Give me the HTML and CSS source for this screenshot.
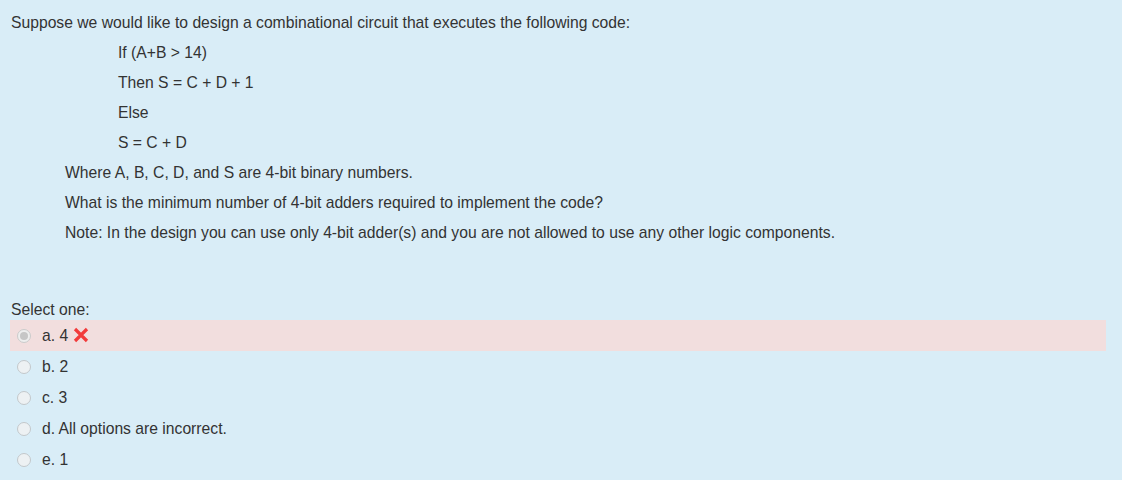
FILE: index.html
```html
<!DOCTYPE html>
<html>
<head>
<meta charset="utf-8">
<link rel="stylesheet" href="styles.css">
</head>
<body>
<div class="que">
  <div class="qtext">
    <p class="line">Suppose we would like to design a combinational circuit that executes the following code:</p>
    <p class="line code">If (A+B &gt; 14)</p>
    <p class="line code">Then S = C + D + 1</p>
    <p class="line code">Else</p>
    <p class="line code">S = C + D</p>
    <p class="line note">Where A, B, C, D, and S are 4-bit binary numbers.</p>
    <p class="line note">What is the minimum number of 4-bit adders required to implement the code?</p>
    <p class="line note">Note: In the design you can use only 4-bit adder(s) and you are not allowed to use any other logic components.</p>
  </div>
  <div class="ablock">
    <div class="prompt">Select one:</div>
    <div class="answer">
      <div class="opt incorrect">
        <span class="radio checked"></span>
        <span class="label">a. 4</span>
        <svg class="xicon" width="16" height="16" viewBox="0 0 16 16"><path d="M2 2 L14 14 M14 2 L2 14" stroke="#f23b3b" stroke-width="3.2" stroke-linecap="butt" fill="none"/></svg>
      </div>
      <div class="opt"><span class="radio"></span><span class="label">b. 2</span></div>
      <div class="opt"><span class="radio"></span><span class="label">c. 3</span></div>
      <div class="opt"><span class="radio"></span><span class="label">d. All options are incorrect.</span></div>
      <div class="opt"><span class="radio"></span><span class="label">e. 1</span></div>
    </div>
  </div>
</div>
</body>
</html>
```
FILE: styles.css
```css
html, body {
  margin: 0;
  padding: 0;
  background: #d9edf7;
}
body {
  font-family: "Liberation Sans", Arial, sans-serif;
  font-size: 15.7px;
  color: #333;
}
.que {
  padding: 8px 16px 0 10px;
}
.line {
  margin: 0;
  line-height: 30px;
  padding-left: 1px;
}
.code {
  padding-left: 108px;
}
.note {
  padding-left: 55px;
}
.ablock {
  margin-top: 52px;
}
.prompt {
  line-height: 20px;
  padding-left: 1px;
}
.opt {
  display: flex;
  align-items: center;
  height: 31px;
  padding-left: 7px;
}
.opt.incorrect {
  background: #f2dede;
}
.radio {
  width: 12px;
  height: 12px;
  border-radius: 50%;
  border: 1px solid #c3c8cb;
  background: #edf1f3;
  margin-right: 11px;
  position: relative;
  flex: none;
}
.radio.checked {
  border-color: #cbcbcb;
  background: #eeeeee;
}
.radio.checked::after {
  content: "";
  position: absolute;
  left: 2px;
  top: 2px;
  width: 8px;
  height: 8px;
  border-radius: 50%;
  background: #c6c6c6;
}
.label {
  line-height: 31px;
}
.xicon {
  margin-left: 5px;
  position: relative;
  top: -1px;
}
```
